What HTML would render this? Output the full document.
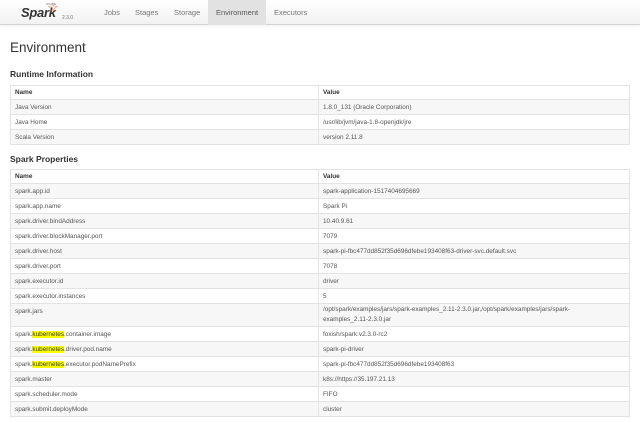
<!DOCTYPE html>
<html><head><meta charset="utf-8"><style>
*{margin:0;padding:0;box-sizing:border-box}
body{width:640px;height:422px;background:#fff;font-family:"Liberation Sans",sans-serif;color:#333;overflow:hidden;position:relative}
.nav{position:absolute;left:0;top:0;width:640px;height:25px;background:linear-gradient(#fff,#f2f2f2);border-bottom:1px solid #d4d4d4;box-shadow:0 1px 3px rgba(0,0,0,.07)}
.nav span{position:absolute;top:8px;font-size:7.5px;color:#777}
.act{position:absolute;left:208px;top:0;width:58px;height:25px;background:#e2e2e2}
h1{position:absolute;left:10px;top:40px;font-size:13.5px;font-weight:normal;color:#333}
h4{position:absolute;left:10px;font-size:8.5px;font-weight:bold;color:#333}
table{position:absolute;left:10px;width:620px;border-collapse:collapse;font-size:6.4px;color:#555}
td,th{border:1px solid #e3e3e3;padding:0 4px;height:15px;text-align:left;vertical-align:middle}
th{font-weight:bold;color:#333;height:14px}
td:first-child,th:first-child{width:308px}
tr:nth-child(even) td{background:#f7f7f7}
.hl{background:#ff0;color:#333}
</style></head><body>
<div class="nav">
<span style="left:21px;top:5px;font-size:13px;color:#333;font-style:italic;font-weight:bold;letter-spacing:-.3px">Spark</span>
<span style="left:47px;top:0px;color:#e25a1c;font-size:13px">☆</span>
<span style="left:46px;top:3px;font-size:2.5px;color:#777">APACHE</span>
<span style="left:62px;top:15px;font-size:5px;color:#777">2.3.0</span>
<div class="act"></div>
<span style="left:104px">Jobs</span>
<span style="left:135px">Stages</span>
<span style="left:174px">Storage</span>
<span style="left:216px;color:#555">Environment</span>
<span style="left:274px">Executors</span>
</div>
<h1>Environment</h1>
<h4 style="top:69px">Runtime Information</h4>
<table style="top:85px">
<tr><th>Name</th><th>Value</th></tr>
<tr><td>Java Version</td><td>1.8.0_131 (Oracle Corporation)</td></tr>
<tr><td>Java Home</td><td>/usr/lib/jvm/java-1.8-openjdk/jre</td></tr>
<tr><td>Scala Version</td><td>version 2.11.8</td></tr>
</table>
<h4 style="top:154px">Spark Properties</h4>
<table style="top:169px">
<tr><th>Name</th><th>Value</th></tr>
<tr><td>spark.app.id</td><td>spark-application-1517404695669</td></tr>
<tr><td>spark.app.name</td><td>Spark Pi</td></tr>
<tr><td>spark.driver.bindAddress</td><td>10.40.9.61</td></tr>
<tr><td>spark.driver.blockManager.port</td><td>7079</td></tr>
<tr><td>spark.driver.host</td><td>spark-pi-fbc477dd852f35d696dfebe193408f63-driver-svc.default.svc</td></tr>
<tr><td>spark.driver.port</td><td>7078</td></tr>
<tr><td>spark.executor.id</td><td>driver</td></tr>
<tr><td>spark.executor.instances</td><td>5</td></tr>
<tr><td style="vertical-align:top;padding-top:4px;height:23px">spark.jars</td><td style="line-height:10px;height:23px">/opt/spark/examples/jars/spark-examples_2.11-2.3.0.jar,/opt/spark/examples/jars/spark-<br>examples_2.11-2.3.0.jar</td></tr>
<tr><td>spark.<span class="hl">kubernetes</span>.container.image</td><td>foxish/spark:v2.3.0-rc2</td></tr>
<tr><td>spark.<span class="hl">kubernetes</span>.driver.pod.name</td><td>spark-pi-driver</td></tr>
<tr><td>spark.<span class="hl">kubernetes</span>.executor.podNamePrefix</td><td>spark-pi-fbc477dd852f35d696dfebe193408f63</td></tr>
<tr><td>spark.master</td><td>k8s://https://35.197.21.13</td></tr>
<tr><td>spark.scheduler.mode</td><td>FIFO</td></tr>
<tr><td>spark.submit.deployMode</td><td>cluster</td></tr>
</table>
</body></html>
